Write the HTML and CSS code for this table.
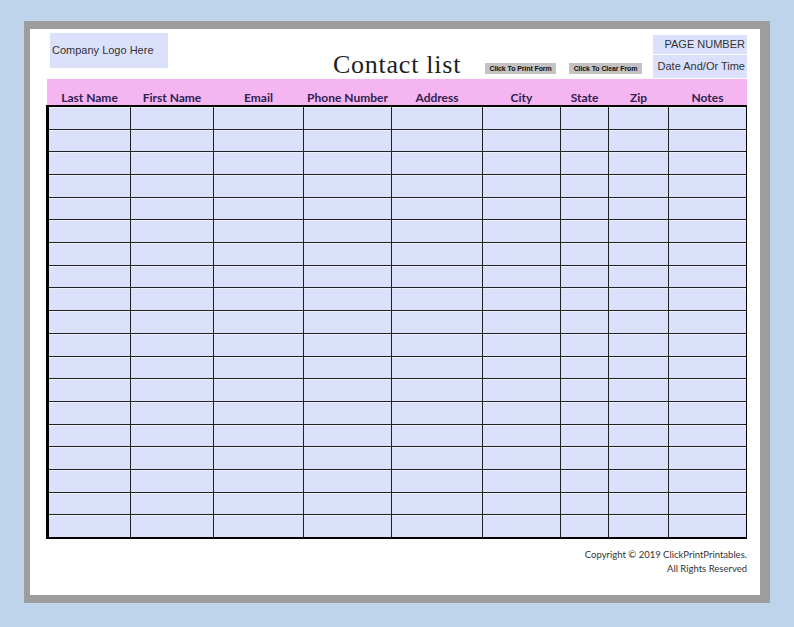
FILE: index.html
```html
<!DOCTYPE html>
<html>
<head>
<meta charset="utf-8">
<link rel="stylesheet" href="styles.css">
</head>
<body>
<div class="frame">
  <div class="top">
    <div class="logo">Company Logo Here</div>
    <h1 class="title">Contact list</h1>
    <div class="btn btn-print">Click To Print Form</div>
    <div class="btn btn-clear">Click To Clear From</div>
    <div class="pagebox">
      <div class="pb-row pb-num">PAGE NUMBER</div>
      <div class="pb-row pb-date">Date And/Or Time</div>
    </div>
  </div>
  <div class="head">
    <div>Last Name</div><div>First Name</div><div>Email</div><div>Phone Number</div><div>Address</div><div>City</div><div>State</div><div>Zip</div><div>Notes</div>
  </div>
  <div class="grid">
    <div class="row"><i></i><i></i><i></i><i></i><i></i><i></i><i></i><i></i><i></i></div>
    <div class="row"><i></i><i></i><i></i><i></i><i></i><i></i><i></i><i></i><i></i></div>
    <div class="row"><i></i><i></i><i></i><i></i><i></i><i></i><i></i><i></i><i></i></div>
    <div class="row"><i></i><i></i><i></i><i></i><i></i><i></i><i></i><i></i><i></i></div>
    <div class="row"><i></i><i></i><i></i><i></i><i></i><i></i><i></i><i></i><i></i></div>
    <div class="row"><i></i><i></i><i></i><i></i><i></i><i></i><i></i><i></i><i></i></div>
    <div class="row"><i></i><i></i><i></i><i></i><i></i><i></i><i></i><i></i><i></i></div>
    <div class="row"><i></i><i></i><i></i><i></i><i></i><i></i><i></i><i></i><i></i></div>
    <div class="row"><i></i><i></i><i></i><i></i><i></i><i></i><i></i><i></i><i></i></div>
    <div class="row"><i></i><i></i><i></i><i></i><i></i><i></i><i></i><i></i><i></i></div>
    <div class="row"><i></i><i></i><i></i><i></i><i></i><i></i><i></i><i></i><i></i></div>
    <div class="row"><i></i><i></i><i></i><i></i><i></i><i></i><i></i><i></i><i></i></div>
    <div class="row"><i></i><i></i><i></i><i></i><i></i><i></i><i></i><i></i><i></i></div>
    <div class="row"><i></i><i></i><i></i><i></i><i></i><i></i><i></i><i></i><i></i></div>
    <div class="row"><i></i><i></i><i></i><i></i><i></i><i></i><i></i><i></i><i></i></div>
    <div class="row"><i></i><i></i><i></i><i></i><i></i><i></i><i></i><i></i><i></i></div>
    <div class="row"><i></i><i></i><i></i><i></i><i></i><i></i><i></i><i></i><i></i></div>
    <div class="row"><i></i><i></i><i></i><i></i><i></i><i></i><i></i><i></i><i></i></div>
    <div class="row"><i></i><i></i><i></i><i></i><i></i><i></i><i></i><i></i><i></i></div>
  </div>
  <div class="copy">Copyright © 2019 ClickPrintPrintables.<br>All Rights Reserved</div>
</div>
</body>
</html>
```
FILE: styles.css
```css
html, body { margin: 0; padding: 0; }
body {
  background: #bed4eb;
  width: 794px;
  height: 627px;
  overflow: hidden;
  font-family: "Liberation Sans", Arial, sans-serif;
}
.frame {
  box-sizing: border-box;
  margin: 21px 0 0 24px;
  width: 746px;
  height: 582px;
  background: #fff;
  border-style: solid;
  border-color: #9d9d9d;
  border-width: 8px 10px 8px 6px;
  padding: 4px 13px 0 17px;
}
.top {
  display: flex;
  height: 46px;
  align-items: flex-start;
}
.logo {
  box-sizing: border-box;
  margin-left: 3px;
  width: 118px;
  height: 35px;
  background: #dce1fb;
  font-size: 11px;
  color: #333;
  padding: 11px 0 0 2px;
}
.title {
  margin: 18px 0 0 165px;
  width: 128px;
  font-family: "Liberation Serif", "Times New Roman", serif;
  font-weight: normal;
  font-size: 26px;
  line-height: 27px;
  letter-spacing: 0.75px;
  color: #1e1e1e;
  white-space: nowrap;
}
.btn {
  margin-top: 30px;
  height: 11px;
  width: 71px;
  background: #c3c3c3;
  font-size: 7px;
  font-weight: bold;
  line-height: 11px;
  text-align: center;
  color: #111;
  white-space: nowrap;
  letter-spacing: -0.1px;
}
.btn-print { margin-left: 24px; }
.btn-clear { margin-left: 13px; width: 73px; }
.pagebox {
  margin-left: 11px;
  margin-top: 2px;
  width: 94px;
  display: flex;
  flex-direction: column;
  gap: 1px;
}
.pb-row {
  background: #dce1fb;
  font-size: 11px;
  color: #333;
  text-align: right;
  padding-right: 2px;
  white-space: nowrap;
}
.pb-num { height: 19px; line-height: 19px; }
.pb-date { height: 23px; line-height: 23px; }
.head {
  display: grid;
  grid-template-columns: 81px 82px 89px 87px 90px 77px 47px 59px 77px;
  column-gap: 1px;
  padding: 0 2px;
  height: 26px;
  background: #f4b5f1;
  box-sizing: border-box;
  font-family: Lato, "Open Sans", sans-serif;
  font-weight: bold;
  font-size: 12px;
  color: #2f2150;
}
.head div {
  text-align: center;
  align-self: end;
  line-height: 14px;
  white-space: nowrap;
}
.grid {
  box-sizing: border-box;
  display: grid;
  grid-template-rows: repeat(19, 1fr);
  row-gap: 1px;
  height: 434px;
  width: 701px;
  margin-left: -1px;
  border: 2px solid #000;
  border-left-width: 3px;
  background: #222;
}
.row {
  display: grid;
  grid-template-columns: 81px 82px 89px 87px 90px 77px 47px 59px 77px;
  column-gap: 1px;
}
.row i {
  display: block;
  background: #dce1fb;
  box-shadow: inset 0 1px 0 #eef0fd;
}
.copy {
  margin-top: 9px;
  text-align: right;
  font-family: Lato, "Open Sans", sans-serif;
  font-size: 9.5px;
  line-height: 14px;
  color: #333;
}
```
